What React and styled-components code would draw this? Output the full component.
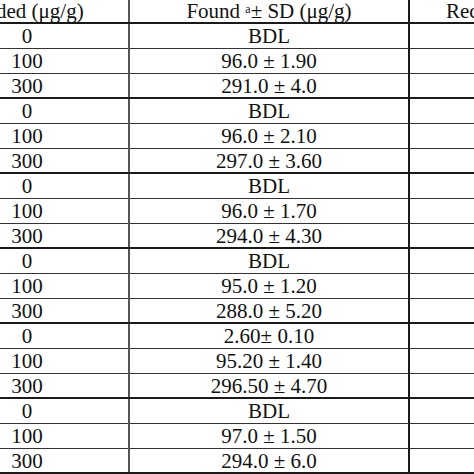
import React from "react";
import styled, { createGlobalStyle } from "styled-components";

const Global = createGlobalStyle`
  html, body { margin: 0; padding: 0; background: #fff; overflow: hidden; }
  body { width: 474px; height: 474px; }
`;

const Frame = styled.div`
  width: 474px;
  height: 474px;
  overflow: hidden;
  background: #fff;
`;

const Table = styled.table`
  border-collapse: collapse;
  table-layout: fixed;
  width: 673px;
  margin-left: -74px;
  font-family: "Liberation Serif", "Times New Roman", serif;
  font-size: 21px;
  color: #111;
`;

const Col = styled.col`
  width: ${(p) => p.$w}px;
`;

const HeadCell = styled.th`
  font-weight: normal;
  height: 22px;
  padding: 0;
  line-height: 22px;
  text-align: center;
  white-space: nowrap;
  border-bottom: 2px solid #1a1a1a;
  border-left: ${(p) => (p.$first ? "none" : p.$dark ? "2px solid #1a1a1a" : "2px solid #555")};
`;

const Cell = styled.td`
  height: ${(p) => (p.$group ? 23 : 24)}px;
  padding: 0;
  text-align: center;
  white-space: nowrap;
  line-height: 22px;
  border-bottom: ${(p) => (p.$group ? "2px solid #1a1a1a" : "1px solid #333")};
  border-left: ${(p) => (p.$first ? "none" : p.$dark ? "2px solid #1a1a1a" : "2px solid #555")};
`;

const Sup = styled.sup`
  font-size: 12px;
  vertical-align: top;
  line-height: 1;
  position: relative;
  top: 3px;
`;

const groups = [
  ["BDL", "96.0 ± 1.90", "291.0 ± 4.0"],
  ["BDL", "96.0 ± 2.10", "297.0 ± 3.60"],
  ["BDL", "96.0 ± 1.70", "294.0 ± 4.30"],
  ["BDL", "95.0 ± 1.20", "288.0 ± 5.20"],
  ["2.60± 0.10", "95.20 ± 1.40", "296.50 ± 4.70"],
  ["BDL", "97.0 ± 1.50", "294.0 ± 6.0"],
];
const added = ["0", "100", "300"];

export default function App() {
  return (
    <Frame>
      <Global />
      <Table>
        <colgroup>
          <Col $w={203} />
          <Col $w={280} />
          <Col $w={190} />
        </colgroup>
        <thead>
          <tr>
            <HeadCell $first>Added (μg/g)</HeadCell>
            <HeadCell>
              Found <Sup>a</Sup>± SD (μg/g)
            </HeadCell>
            <HeadCell $dark>Recovery (%)</HeadCell>
          </tr>
        </thead>
        <tbody>
          {groups.map((g, gi) =>
            g.map((found, i) => (
              <tr key={`${gi}-${i}`}>
                <Cell $first $group={i === 2}>{added[i]}</Cell>
                <Cell $group={i === 2}>{found}</Cell>
                <Cell $dark $group={i === 2}></Cell>
              </tr>
            ))
          )}
        </tbody>
      </Table>
    </Frame>
  );
}
